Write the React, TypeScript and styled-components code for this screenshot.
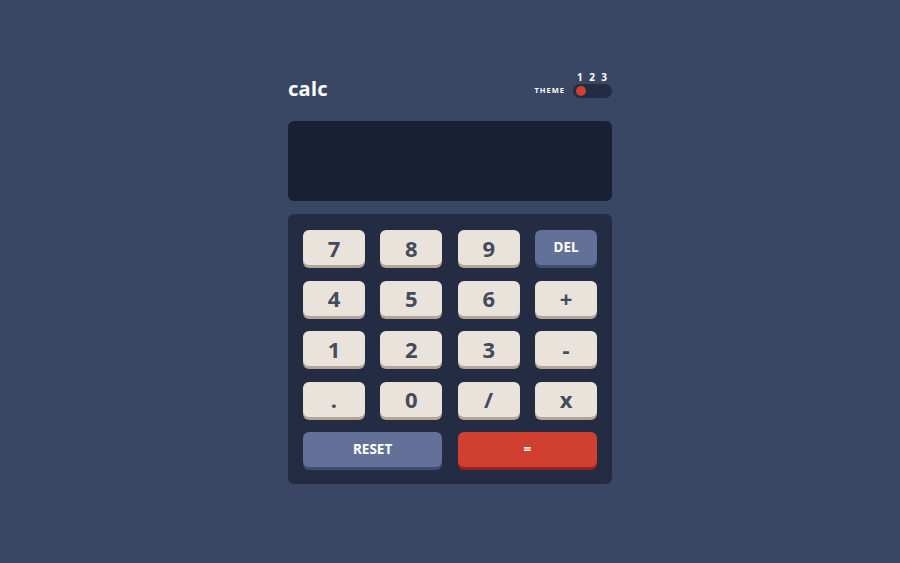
import React from 'react';
import styled, {createGlobalStyle} from "styled-components";

const colors = {
    page: '#3a4764',
    screen: '#182034',
    keypad: '#232c43',
    key: '#eae3dc',
    keyShadow: '#b4a597',
    keyText: '#444b5a',
    accent: '#637097',
    accentShadow: '#404e72',
    equal: '#d03f2f',
    equalShadow: '#93261a',
    white: '#ffffff',
}

type KeyKind = 'num' | 'accent' | 'equal'

type KeyType = {
    label: string
    kind?: KeyKind
    wide?: boolean
}

const keys: Array<KeyType> = [
    {label: '7'}, {label: '8'}, {label: '9'}, {label: 'DEL', kind: 'accent'},
    {label: '4'}, {label: '5'}, {label: '6'}, {label: '+'},
    {label: '1'}, {label: '2'}, {label: '3'}, {label: '-'},
    {label: '.'}, {label: '0'}, {label: '/'}, {label: 'x'},
    {label: 'RESET', kind: 'accent', wide: true}, {label: '=', kind: 'equal', wide: true},
]

const App = () => {
    return (
        <>
            <GlobalStyle/>
            <Page>
                <Calculator>
                    <Header>
                        <Logo>calc</Logo>
                        <ThemeSwitch>
                            <ThemeLabel>THEME</ThemeLabel>
                            <SwitchColumn>
                                <SwitchNumbers>
                                    <span>1</span>
                                    <span>2</span>
                                    <span>3</span>
                                </SwitchNumbers>
                                <Track>
                                    <Knob/>
                                </Track>
                            </SwitchColumn>
                        </ThemeSwitch>
                    </Header>
                    <Screen/>
                    <Keypad>
                        {keys.map((k) => (
                            <Key key={k.label} kind={k.kind ?? 'num'} wide={k.wide}>
                                {k.label}
                            </Key>
                        ))}
                    </Keypad>
                </Calculator>
            </Page>
        </>
    );
};

export default App;

const GlobalStyle = createGlobalStyle`
  * {
    box-sizing: border-box;
  }

  body {
    margin: 0;
    background: ${colors.page};
    font-family: "Noto Sans", "Open Sans", sans-serif;
  }
`

const Page = styled.div`
  min-height: 563px;
  display: flex;
  justify-content: center;
  padding-top: 70px;
`

const Calculator = styled.div`
  width: 324px;
  display: flex;
  flex-direction: column;
`

const Header = styled.header`
  display: flex;
  justify-content: space-between;
  align-items: flex-end;
  height: 28px;
  margin-bottom: 23px;
`

const Logo = styled.h1`
  margin: 0 0 -1px;
  color: ${colors.white};
  font-size: 20px;
  font-weight: 700;
  line-height: 1;
  letter-spacing: 0.3px;
`

const ThemeSwitch = styled.div`
  display: flex;
  align-items: flex-end;
  gap: 8px;
`

const ThemeLabel = styled.span`
  color: ${colors.white};
  font-size: 7.5px;
  font-weight: 700;
  letter-spacing: 1px;
  line-height: 1;
  padding-bottom: 4px;
`

const SwitchColumn = styled.div`
  display: flex;
  flex-direction: column;
  gap: 1px;
`

const SwitchNumbers = styled.div`
  display: flex;
  justify-content: space-between;
  padding: 0 5px 0 4px;
  color: ${colors.white};
  font-size: 10px;
  font-weight: 700;
  line-height: 12px;
`

const Track = styled.div`
  width: 39px;
  height: 14px;
  border-radius: 7px;
  background: ${colors.keypad};
  display: flex;
  align-items: center;
  padding: 0 3px;
`

const Knob = styled.div`
  width: 10px;
  height: 10px;
  border-radius: 50%;
  background: ${colors.equal};
`

const Screen = styled.div`
  height: 80px;
  border-radius: 6px;
  background: ${colors.screen};
  margin-bottom: 13px;
`

const Keypad = styled.div`
  background: ${colors.keypad};
  border-radius: 6px;
  padding: 16px 15px 14px;
  display: grid;
  grid-template-columns: repeat(4, 1fr);
  column-gap: 15.5px;
  row-gap: 12.5px;
`

const keyColors = {
    num: {bg: colors.key, shadow: colors.keyShadow, text: colors.keyText},
    accent: {bg: colors.accent, shadow: colors.accentShadow, text: colors.white},
    equal: {bg: colors.equal, shadow: colors.equalShadow, text: colors.white},
}

const Key = styled.button<{ kind: KeyKind, wide?: boolean }>`
  grid-column: ${props => props.wide ? 'span 2' : 'span 1'};
  height: 35px;
  margin-bottom: 3px;
  border: none;
  border-radius: 6px;
  background: ${props => keyColors[props.kind].bg};
  box-shadow: 0 3px 0 ${props => keyColors[props.kind].shadow};
  color: ${props => keyColors[props.kind].text};
  font-family: inherit;
  font-weight: 700;
  font-size: ${props => props.kind === 'num' ? '22px' : '13.5px'};
  line-height: 1;
  padding: 0;
  cursor: pointer;
  display: flex;
  align-items: center;
  justify-content: center;
`
